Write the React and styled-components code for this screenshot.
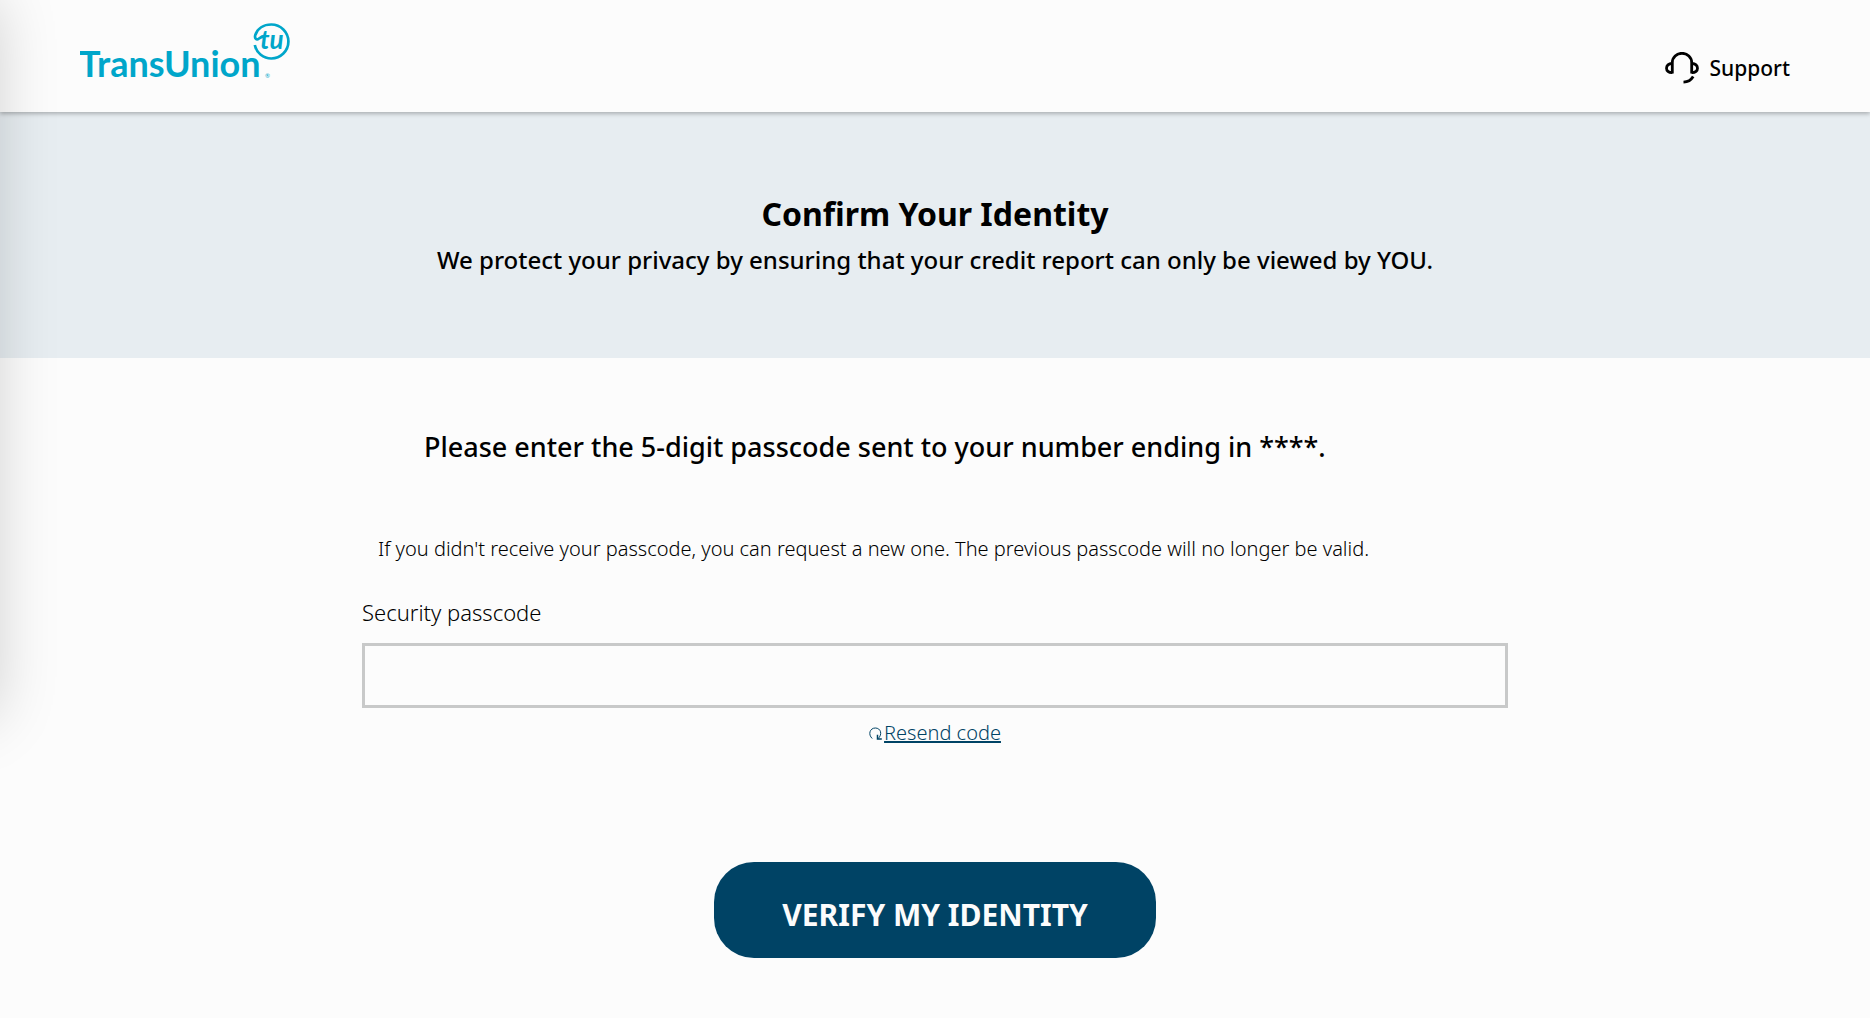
import styled, { createGlobalStyle } from "styled-components";

const GlobalStyle = createGlobalStyle`
  * {
    box-sizing: border-box;
  }
  body {
    margin: 0;
    background: #fcfcfc;
    color: #000000;
    font-family: "Noto Sans", sans-serif;
    overflow-x: hidden;
  }
`;

const Header = styled.header`
  position: relative;
  display: flex;
  justify-content: space-between;
  align-items: flex-start;
  height: 112px;
  padding: 22px 80px 0;
  background: #fcfcfc;
  box-shadow: 0 2px 4px rgba(0, 0, 0, 0.25);
`;

const LogoLink = styled.a`
  display: block;
  svg {
    display: block;
  }
`;

const SupportLink = styled.a`
  display: flex;
  align-items: center;
  gap: 10px;
  margin-top: 26px;
  color: inherit;
  font-size: 21px;
  font-weight: 500;
  line-height: 40px;
  text-decoration: none;
`;

const SideMenu = styled.div`
  position: absolute;
  top: 0;
  left: -306px;
  width: 300px;
  height: 716px;
  box-shadow: 0 0 60px rgba(0, 0, 0, 0.2);
  pointer-events: none;
`;

const Banner = styled.section`
  padding: 80px 20px;
  background: #e7edf1;
  text-align: center;
`;

const Title = styled.h1`
  margin: 0;
  font-size: 32px;
  font-weight: 700;
  line-height: 44px;
`;

const Subtitle = styled.p`
  margin: 6px 0 0;
  font-size: 24px;
  font-weight: 500;
  line-height: 36px;
`;

const Form = styled.form`
  max-width: 1146px;
  margin: 0 auto;
  padding: 69px 0 60px;
`;

const Lead = styled.h2`
  margin: 0 62px;
  font-size: 27px;
  font-weight: 500;
  line-height: 40px;
`;

const Note = styled.p`
  margin: 66px 16px 0;
  font-size: 20px;
  font-weight: 300;
  line-height: 32px;
`;

const Label = styled.label`
  display: block;
  margin: 31px 0 15px;
  font-size: 22px;
  font-weight: 300;
  line-height: 32px;
`;

const PasscodeInput = styled.input`
  display: block;
  width: 100%;
  height: 65px;
  padding: 0 16px;
  border: 3px solid #c8c9c9;
  border-radius: 0;
  background: transparent;
  font-family: inherit;
  font-size: 24px;
`;

const Resend = styled.div`
  display: flex;
  justify-content: center;
  align-items: center;
  gap: 2px;
  margin-top: 9px;
  color: #004365;
  font-size: 20px;
  font-weight: 300;
  line-height: 32px;
`;

const ResendLink = styled.a`
  color: inherit;
`;

const VerifyButton = styled.button`
  display: block;
  width: 442px;
  max-width: 100%;
  height: 96px;
  margin: 113px auto 0;
  padding: 8px 0 0;
  border: 0;
  border-radius: 40px;
  background: #004365;
  color: #fcfcfc;
  font-family: inherit;
  font-size: 30px;
  font-weight: 700;
  text-transform: uppercase;
  cursor: pointer;
`;

const Logo = () => (
  <svg width="214" height="72" viewBox="0 0 214 72" fill="#00a6ca" role="img">
    <title>TransUnion</title>
    <text x="-1" y="55" fontFamily="Lato, sans-serif" fontSize="36" fontWeight="700">
      TransUnion
    </text>
    <text x="185" y="56" fontFamily="Lato, sans-serif" fontSize="6">
      ®
    </text>
    <path
      d="M174.800 23 C176.500 31 183.500 36.500 191.300 36.500 C200.600 36.500 208.400 29 208.400 19.600 C208.400 10 200.600 2.500 191.300 2.500 C183.500 2.500 177.500 6.500 175.300 13 C174.300 16.500 176.500 18.500 179 16.500 C180.500 15.200 181.500 14.600 184 14.600"
      fill="none"
      stroke="#00a6ca"
      strokeWidth="2.700"
    />
    <text
      x="180"
      y="27"
      fontFamily="Lato, sans-serif"
      fontSize="26"
      fontWeight="700"
      fontStyle="italic"
    >
      tu
    </text>
  </svg>
);

const HeadsetIcon = () => (
  <svg
    width="34"
    height="32"
    viewBox="0 0 34 32"
    fill="none"
    stroke="#000000"
    strokeWidth="2.800"
    aria-hidden="true"
  >
    <path d="M7.300 21.500 V10.500 a9.700 9.200 0 0 1 19.400 0 V21.500" />
    <path d="M7.300 11.500 C-0.400 11.300 -0.400 21 7.300 20.700" />
    <path d="M26.700 11.500 C34.400 11.300 34.400 21 26.700 20.700" />
    <path d="M28.200 24.500 C26 28.200 23 30 18.500 30.200" />
  </svg>
);

const ResendIcon = () => (
  <svg
    width="13"
    height="13"
    viewBox="0 0 13 13"
    fill="none"
    stroke="#004365"
    strokeWidth="1"
    aria-hidden="true"
  >
    <path d="M3.200 11.500 C-1.200 7.500 0.800 1 6.300 1 C12 1 13.500 7.500 9.200 11.500" />
    <path d="M8.500 7.800 V12 H12.800" strokeWidth="1.500" />
  </svg>
);

const App = () => {
  return (
    <>
      <GlobalStyle />
      <Header>
        <LogoLink href="#home">
          <Logo />
        </LogoLink>
        <SupportLink href="#support">
          <HeadsetIcon />
          Support
        </SupportLink>
      </Header>
      <main>
        <Banner>
          <Title>Confirm Your Identity</Title>
          <Subtitle>
            We protect your privacy by ensuring that your credit report can only
            be viewed by YOU.
          </Subtitle>
        </Banner>
        <Form>
          <Lead>
            Please enter the 5-digit passcode sent to your number ending in ****.
          </Lead>
          <Note>
            If you didn't receive your passcode, you can request a new one. The
            previous passcode will no longer be valid.
          </Note>
          <Label htmlFor="passcode">Security passcode</Label>
          <PasscodeInput id="passcode" type="text" inputMode="numeric" />
          <Resend>
            <ResendIcon />
            <ResendLink href="#resend">Resend code</ResendLink>
          </Resend>
          <VerifyButton type="button">Verify my identity</VerifyButton>
        </Form>
      </main>
      <SideMenu />
    </>
  );
};

export default App;
